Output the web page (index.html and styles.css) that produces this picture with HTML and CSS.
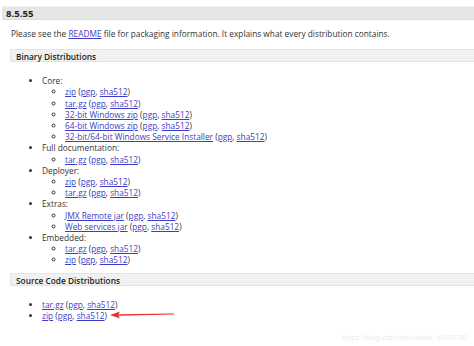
FILE: index.html
```html
<!DOCTYPE html>
<html lang="en">
<head>
    <meta charset="UTF-8">
    <title>Tomcat 8.5.55 Downloads</title>
    <link rel="stylesheet" href="styles.css">
</head>
<body>
    <h3 class="version">8.5.55</h3>

    <p class="intro">Please see the <a href="#">README</a> file for packaging information. It explains what every distribution contains.</p>

    <div class="section">
        <h4 class="section-title">Binary Distributions</h4>
        <ul class="dist">
            <li>Core:
                <ul>
                    <li><a href="#">zip</a> (<a href="#">pgp</a>, <a href="#">sha512</a>)</li>
                    <li><a href="#">tar.gz</a> (<a href="#">pgp</a>, <a href="#">sha512</a>)</li>
                    <li><a href="#">32-bit Windows zip</a> (<a href="#">pgp</a>, <a href="#">sha512</a>)</li>
                    <li><a href="#">64-bit Windows zip</a> (<a href="#">pgp</a>, <a href="#">sha512</a>)</li>
                    <li><a href="#">32-bit/64-bit Windows Service Installer</a> (<a href="#">pgp</a>, <a href="#">sha512</a>)</li>
                </ul>
            </li>
            <li>Full documentation:
                <ul>
                    <li><a href="#">tar.gz</a> (<a href="#">pgp</a>, <a href="#">sha512</a>)</li>
                </ul>
            </li>
            <li>Deployer:
                <ul>
                    <li><a href="#">zip</a> (<a href="#">pgp</a>, <a href="#">sha512</a>)</li>
                    <li><a href="#">tar.gz</a> (<a href="#">pgp</a>, <a href="#">sha512</a>)</li>
                </ul>
            </li>
            <li>Extras:
                <ul>
                    <li><a href="#">JMX Remote jar</a> (<a href="#">pgp</a>, <a href="#">sha512</a>)</li>
                    <li><a href="#">Web services jar</a> (<a href="#">pgp</a>, <a href="#">sha512</a>)</li>
                </ul>
            </li>
            <li>Embedded:
                <ul>
                    <li><a href="#">tar.gz</a> (<a href="#">pgp</a>, <a href="#">sha512</a>)</li>
                    <li><a href="#">zip</a> (<a href="#">pgp</a>, <a href="#">sha512</a>)</li>
                </ul>
            </li>
        </ul>
    </div>

    <div class="section">
        <h4 class="section-title">Source Code Distributions</h4>
        <ul class="dist">
            <li><a href="#">tar.gz</a> (<a href="#">pgp</a>, <a href="#">sha512</a>)</li>
            <li class="marked"><a href="#">zip</a> (<a href="#">pgp</a>, <a href="#">sha512</a>)
                <svg class="arrow" width="66" height="8" viewBox="0 0 66 8">
                    <path d="M8 3.2 L64 2.6 L64 3.6 L8 4.8 Z" fill="#e8302c"/>
                    <path d="M0 4 L10 0.5 L8 4 L10 7.5 Z" fill="#e8302c"/>
                </svg>
            </li>
        </ul>
    </div>

    <div class="watermark">https://blog.csdn.net/weixin_40907382</div>
</body>
</html>
```

FILE: styles.css
```css
body { margin: 0; padding: 6px 0 0 2px; font-family: "Open Sans", "Noto Sans", sans-serif; font-size: 8.3px; line-height: 11.2px; color: #333; background: #fff; position: relative; height: 340px; overflow: hidden; }
a { color: #3d3dc8; text-decoration: underline; }
.version { margin: 0; padding: 0 4px; height: 14px; line-height: 14px; font-size: 9.6px; font-weight: bold; color: #222; background: #e6e6e6; border-top: 1px solid #efefef; border-bottom: 1px solid #dadada; box-sizing: border-box; }
.intro { margin: 8px 0 10px 9px; }
.section { margin-left: 8px; }
.section-title { margin: 0; padding: 0 5px; height: 13px; line-height: 13px; font-size: 8.3px; font-weight: 600; color: #222; background: #f1f1f1; border: 1px solid #e4e4e4; border-right: none; box-sizing: border-box; }
.dist { margin: 13px 0 7px 0; padding-left: 32px; list-style: disc; }
.section:last-of-type .dist { margin-top: 11px; }
.dist ul { margin: 0; padding-left: 23px; list-style: circle; }
.marked { position: relative; }
.arrow { position: absolute; left: 68px; top: 1px; }
.watermark { position: absolute; right: 6px; bottom: 3px; font-size: 7px; color: #ececec; }
```
